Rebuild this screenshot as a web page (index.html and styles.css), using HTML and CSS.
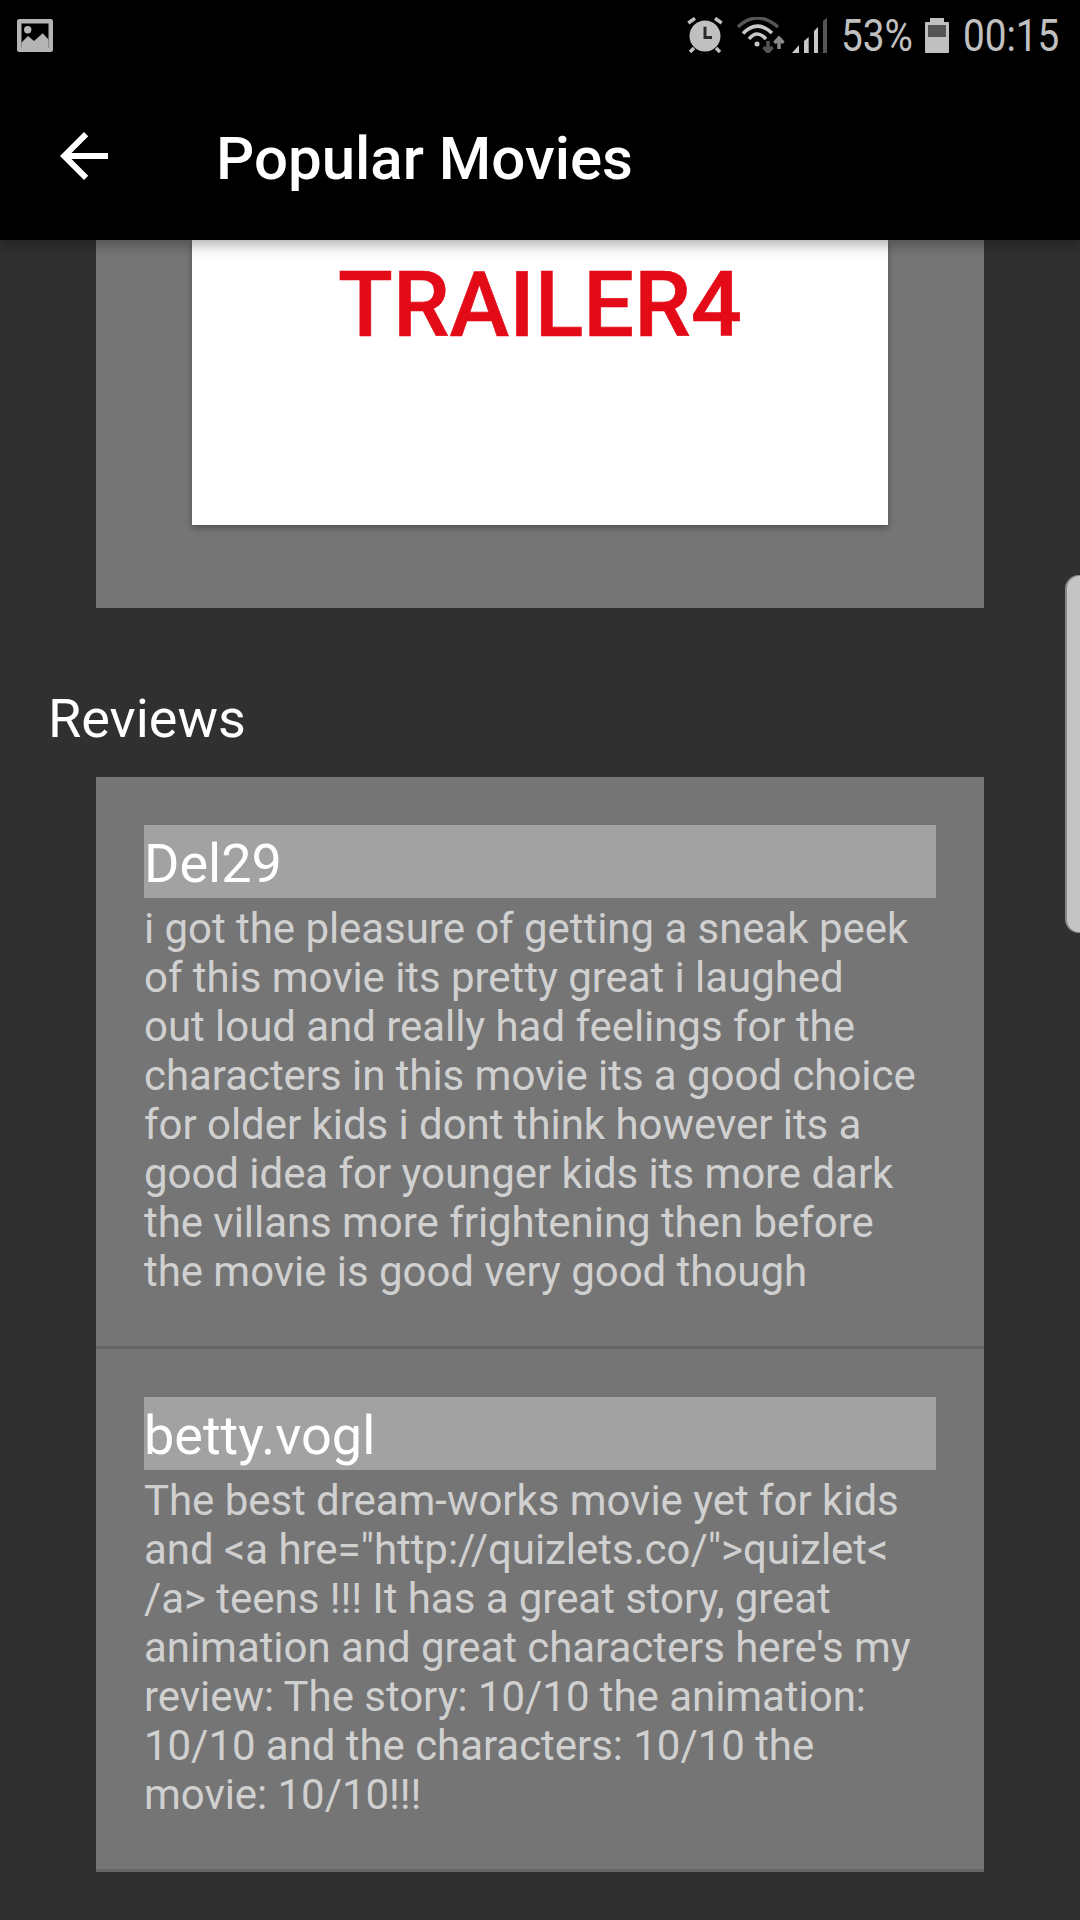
FILE: index.html
```html
<!DOCTYPE html>
<html lang="en">
<head>
    <meta charset="UTF-8">
    <meta name="viewport" content="width=device-width, initial-scale=1.0">
    <title>Popular Movies</title>
    <link rel="stylesheet" href="styles.css">
</head>
<body>
    <div class="screen">
        <header class="app-header">
            <!-- Status bar -->
            <div class="status-bar">
                <svg class="icon-gallery" width="36" height="33" viewBox="0 0 36 33">
                    <rect x="0" y="0" width="36" height="33" rx="2.5" fill="#b4b4b4"/>
                    <rect x="4.5" y="4.5" width="27" height="24" fill="#000"/>
                    <circle cx="10.7" cy="10.7" r="3.7" fill="#b4b4b4"/>
                    <path d="M4.5 23.5 L11 17 L17 22 L25.7 14.3 L31.5 20.5 V29 H4.5 Z" fill="#b4b4b4"/>
                </svg>
                <svg class="icon-alarm" width="36" height="36" viewBox="0 0 36 36">
                    <path d="M1.3 6 L8 1.3 M28 1.3 L34.7 6 M3 35 L7 31 M33 35 L29 31" stroke="#c0c0c0" stroke-width="3.5" fill="none"/>
                    <circle cx="18" cy="19" r="15.5" fill="#c0c0c0"/>
                    <path d="M18 9.7 V20.5 H25" stroke="#2a2a2a" stroke-width="3" fill="none"/>
                </svg>
                <svg class="icon-wifi" width="48" height="36" viewBox="0 0 48 36">
                    <path d="M1 10 Q20 -8 41 10" stroke="#555" stroke-width="3.5" fill="none"/>
                    <path d="M6 16.5 Q20 2 35 16" stroke="#c8c8c8" stroke-width="3.5" fill="none"/>
                    <path d="M12 22 Q20 12 29 22" stroke="#c8c8c8" stroke-width="3.5" fill="none"/>
                    <circle cx="20" cy="27" r="2.5" fill="#c8c8c8"/>
                    <path d="M31 24 V35 M26.5 30 L31 35 L35.5 30" stroke="#555" stroke-width="3.5" fill="none"/>
                    <path d="M42 32 V22 M37.5 26 L42 21 L46.5 26" stroke="#8a8a8a" stroke-width="3.5" fill="none"/>
                </svg>
                <svg class="icon-signal" width="35" height="36" viewBox="0 0 35 36">
                    <polygon points="0,36 7,28 7,36" fill="#c8c8c8"/>
                    <polygon points="12,36 12,24 16.7,20 16.7,36" fill="#c8c8c8"/>
                    <polygon points="22,36 22,14 26,10 26,36" fill="#c8c8c8"/>
                    <polygon points="31,36 31,4 35,0.7 35,36" fill="#555"/>
                </svg>
                <span class="status-text status-percent">53%</span>
                <svg class="icon-battery" width="24" height="36" viewBox="0 0 24 36">
                    <path d="M5 1 H19 V5 H23 Q24 5 24 6 V35 Q24 36 23 36 H1 Q0 36 0 35 V6 Q0 5 1 5 H5 Z" fill="#c0c0c0"/>
                    <rect x="3" y="8" width="18" height="12" fill="#555"/>
                </svg>
                <span class="status-text status-time">00:15</span>
            </div>

            <!-- Toolbar -->
            <div class="toolbar">
                <svg class="icon-back" width="72" height="72" viewBox="0 0 24 24">
                    <path d="M20 11H7.83l5.59-5.59L12 4l-8 8 8 8 1.41-1.41L7.83 13H20v-2z" fill="#fff"/>
                </svg>
                <h1 class="toolbar-title">Popular Movies</h1>
            </div>
        </header>

        <main class="content">
            <section class="card trailer-card">
                <div class="trailer-box">TRAILER4</div>
            </section>

            <h2 class="section-title">Reviews</h2>

            <section class="card">
                <article class="review">
                    <div class="review-author">Del29</div>
                    <p class="review-text">i got the pleasure of getting a sneak peek<br>of this movie its pretty great i laughed<br>out loud and really had feelings for the<br>characters in this movie its a good choice<br>for older kids i dont think however its a<br>good idea for younger kids its more dark<br>the villans more frightening then before<br>the movie is good very good though</p>
                </article>
                <article class="review">
                    <div class="review-author">betty.vogl</div>
                    <p class="review-text">The best dream-works movie yet for kids<br>and &lt;a hre="http://quizlets.co/"&gt;quizlet&lt;<br>/a&gt; teens !!! It has a great story, great<br>animation and great characters here's my<br>review: The story: 10/10 the animation:<br>10/10 and the characters: 10/10 the<br>movie: 10/10!!!</p>
                </article>
            </section>
        </main>

        <!-- Edge panel handle -->
        <div class="edge-handle"></div>
    </div>
</body>
</html>
```

FILE: styles.css
```css
* {
    box-sizing: border-box;
}

html, body {
    margin: 0;
    padding: 0;
}

body {
    font-family: Roboto, "Noto Sans", sans-serif;
    background: #303030;
}

.screen {
    position: relative;
    width: 1080px;
    height: 1920px;
    overflow: hidden;
    background: #303030;
}

.app-header {
    position: relative;
    z-index: 2;
    height: 240px;
    background: #000;
    box-shadow: 0 4px 14px rgba(0,0,0,0.35);
}

/* Status bar */
.status-bar {
    display: flex;
    align-items: center;
    height: 72px;
    padding: 0 22px 2px 17px;
    color: #c0c0c0;
}

.icon-gallery {
    margin-right: auto;
}

.icon-wifi {
    margin-left: 14px;
}

.icon-signal {
    margin-left: 7px;
}

.status-text {
    display: inline-block;
    font-size: 45px;
    line-height: 45px;
    white-space: nowrap;
    transform-origin: left center;
    transform: scaleX(0.86);
}

.status-percent {
    width: 71px;
    margin-left: 14px;
}

.icon-battery {
    margin-left: 13px;
}

.status-time {
    width: 95px;
    margin-left: 14px;
}

/* Toolbar */
.toolbar {
    display: flex;
    align-items: center;
    height: 168px;
    padding-left: 48px;
}

.toolbar-title {
    margin: 4px 0 0 96px;
    font-size: 60px;
    font-weight: 500;
    color: #fff;
}

/* Cards */
.card {
    margin: 0 96px;
    background: #757575;
}

.trailer-card {
    padding: 0 96px 83px;
}

.trailer-box {
    height: 285px;
    padding-top: 13px;
    background: #fff;
    box-shadow: 0 3px 6px rgba(0,0,0,0.3);
    color: #e30b17;
    font-size: 90px;
    font-weight: 500;
    -webkit-text-stroke: 0.6px #e30b17;
    text-align: center;
}

.section-title {
    margin: 0;
    padding: 81px 0 29px 48px;
    font-size: 54px;
    font-weight: 400;
    line-height: 59px;
    color: #fff;
}

.review {
    padding: 48px 48px 50px;
    border-bottom: 3px solid #666;
}

.review-author {
    height: 73px;
    padding-top: 7px;
    background: #a2a2a2;
    color: #fff;
    font-size: 54px;
    line-height: 63px;
}

.review-text {
    margin: 6px 0 0;
    font-size: 42px;
    line-height: 49px;
    letter-spacing: -0.05px;
    color: #d0d0d0;
    white-space: nowrap;
}

.edge-handle {
    position: absolute;
    top: 575px;
    right: 0;
    width: 15px;
    height: 358px;
    background: #c4c4c4;
    border: solid #888;
    border-width: 1px 0 1px 2px;
    border-radius: 14px 0 0 14px;
}
```
